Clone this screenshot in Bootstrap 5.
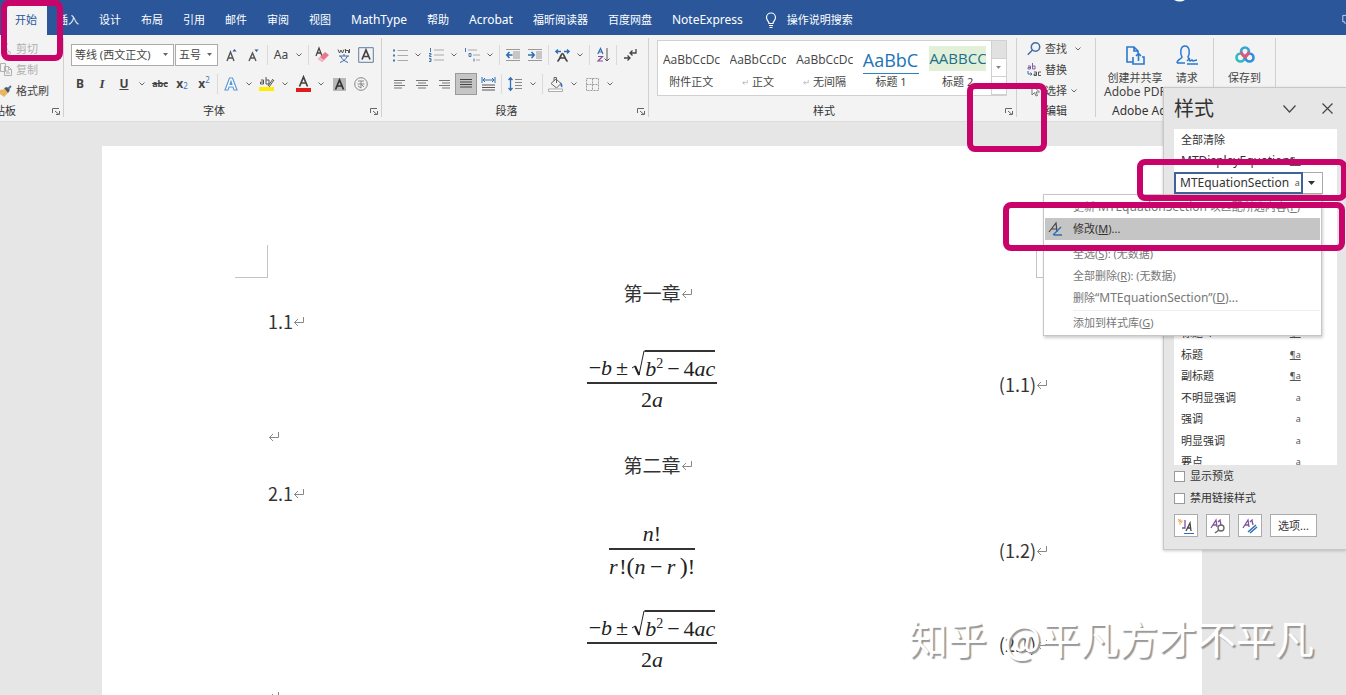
<!DOCTYPE html>
<html lang="zh-CN">
<head>
<meta charset="utf-8">
<meta name="viewport" content="width=device-width, initial-scale=1">
<title>文档 - Word</title>
<link href="https://cdn.jsdelivr.net/npm/bootstrap@5.3.0/dist/css/bootstrap.min.css" rel="stylesheet">
<style>
  :root { --blue:#2b579a; --ink:#444; --line:#d0d0d0; --pink:#c8046a; --desk:#e6e6e6; }
  body { font-family:"Noto Sans","Noto Sans CJK SC",sans-serif; font-size:11px; line-height:16px; color:var(--ink); background:var(--desk); height:100vh; overflow:hidden; }
  svg { display:block; flex:none; overflow:visible; }
  button { font:inherit; color:inherit; background:none; border:0; padding:0; }
  a { color:inherit; text-decoration:none; }
  .lt { font-size:12px; }

  /* tab strip */
  .tabs { background:var(--blue); color:#fff; height:35px; padding:5px 0 0 5px; overflow:hidden; flex:none; }
  .tabs a { padding:7px 10px; height:30px; white-space:nowrap; }
  .tabs a.active { background:#f3f3f3; color:var(--blue); }

  /* ribbon */
  .ribbon { background:#f3f3f3; padding:3px 0 4px; border-bottom:1px solid #dcdcdc; overflow:hidden; flex:none; }
  .group { flex:none; min-height:79px; border-right:1px solid var(--line); display:flex; flex-direction:column; }
  .g-clip { width:64px; } .g-font { width:318px; } .g-para { width:267px; } .g-style { width:368px; }
  .g-edit { width:79px; } .g-adobe { width:118px; } .g-save { width:62px; }
  .foot { margin-top:auto; height:12px; line-height:12px; display:flex; justify-content:center; align-items:center; color:#333; position:relative; white-space:nowrap; }
  .foot button { position:absolute; right:3px; top:3px; }
  .tools { height:22px; }
  .tb { width:22px; height:22px; display:flex; align-items:center; justify-content:center; flex:none; }
  .tb.on { background:#c5c5c5; border:1px solid #999; }
  .chev { width:14px; height:22px; display:flex; align-items:center; justify-content:center; flex:none; }
  .vr-s { width:5px; height:20px; display:flex; justify-content:center; }
  .vr-s::before { content:""; width:1px; background:#dadada; }
  .combo { height:22px; border:1px solid #ababab; border-radius:0; padding:0 12px 0 3px; font-size:11px; line-height:16px; color:#444; background:#fff url("data:image/svg+xml,%3Csvg xmlns='http://www.w3.org/2000/svg' width='6' height='4'%3E%3Cpath d='M0 0h5L2.500 3z' fill='%23666'/%3E%3C/svg%3E") no-repeat right 4px center; appearance:none; }
  .cmd { height:21px; display:flex; align-items:center; gap:4px; }
  .off { color:#b0b0b0; }

  .gallery { background:#fff; border:1px solid var(--line); height:56px; margin:2px 9px 0 8px; }
  .style-item { flex:1 1 0; min-width:0; padding:0 5px; display:flex; flex-direction:column; text-align:center; }
  .sample { height:28px; margin-top:5px; line-height:28px; font-size:12px; font-family:"Open Sans","Noto Sans",sans-serif; overflow:hidden; white-space:nowrap; text-align:left; color:#444; }
  .sample.h1s { font-size:18px; color:#1c73b5; border-bottom:1px solid #2b83c6; }
  .sample.h2s { font-size:15px; color:#1c6f8c; background:#e2efd9; height:25px; line-height:25px; margin-bottom:3px; }
  .scrolls { width:15px; flex:none; border-left:1px solid var(--line); }
  .scrolls button { flex:1; border-bottom:1px solid var(--line); display:flex; align-items:center; justify-content:center; }
  .scrolls button:first-child { background:#e1e1e1; }
  .big { display:flex; flex-direction:column; align-items:center; line-height:14px; white-space:nowrap; padding-top:7px; }

  /* document */
  .desk { padding:24px 144px 0 102px; flex:1 1 0; min-height:0; overflow:hidden; }
  .sheet { background:#fff; padding:99px 133px 0; height:100%; overflow:hidden; }
  .crop { width:33px; height:33px; border:solid #c4c4c4; border-width:0 1px 1px 0; }
  .crop.end { border-width:0 0 1px 1px; }
  .copy { padding:0 33px; font-family:"Noto Sans CJK SC",sans-serif; font-size:19px; color:#333; }
  .copy p { margin:0; height:29px; line-height:29px; }
  .num { font-size:18px; }
  .pm { display:inline-block; width:12px; height:10px; margin-right:-12px; vertical-align:2px; }
  .eq { display:grid; grid-template-columns:1fr auto 1fr; align-items:center; padding:16px 0 5px; }
  .eq.tight { padding:10px 0 14px; }
  .frac { font-family:"Liberation Serif",serif; font-size:22px; line-height:32px; color:#222; text-align:center; }
  .over { height:32px; border-bottom:2px solid #333; padding:0 2px; display:flex; justify-content:center; }
  .under { height:32px; }
  .frac sup { font-size:14px; line-height:0; top:-8px; }
  .root { border-top:2px solid #333; margin-top:-2px; height:28px; line-height:34px; }
  .mx { margin:0 4px; }

  /* styles pane */
  .pane { position:absolute; right:0; top:87px; width:183px; height:463px; background:var(--desk); border:1px solid #c8c8c8; border-right:0; box-shadow:0 1px 3px rgba(0,0,0,.2); padding:0 9px 0 10px; color:#333; }
  .pane h2 { font-size:20px; line-height:41px; margin:0; font-weight:400; flex:1; color:#333; }
  .slist { height:336px; overflow:hidden; background:#fff; }
  .slist ul { height:344px; display:grid; grid-auto-rows:1fr; margin:0; padding:0; list-style:none; }
  .slist li { padding:0 38px 0 7px; display:flex; justify-content:space-between; align-items:center; position:relative; }
  .slist small { font-size:9px; color:#555; }
  .slist li.sel { margin-right:16px; padding:0; border:1px solid #aaa; }
  .sel .nm { border:2px solid #3d6398; flex:1; padding:0 1px 0 4px; margin:-1px; display:flex; align-items:center; justify-content:space-between; height:22px; }
  .sel button { width:20px; display:flex; justify-content:center; }
  .pane label { display:flex; align-items:center; gap:5px; height:22px; }
  .pane input { appearance:none; width:11px; height:11px; margin:0; background:#fff; border:1px solid #999; }
  .pbtn { height:23px; width:24px; background:#fff; border:1px solid #ababab; display:flex; align-items:center; justify-content:center; }
  .pbtn.wide { width:47px; }

  /* context menu */
  .ctx { position:absolute; right:24px; top:194px; width:279px; background:#fff; border:1px solid #c6c6c6; box-shadow:1px 2px 3px rgba(0,0,0,.2); padding:1px; color:#777; white-space:nowrap; }
  .ctx button { display:block; text-align:left; width:100%; height:22px; line-height:22px; padding-left:28px; }
  .ctx .hot { display:flex; align-items:center; background:#c5c5c5; color:#333; padding-left:3px; gap:9px; }
  .ctx hr { margin:1px 0 1px 28px; border-color:#bbb; }

  /* highlight frames and signature drawn over the window */
  .frame { position:absolute; border:6px solid var(--pink); border-radius:8px; pointer-events:none; }
  .f1 { left:1px; top:0; width:62px; height:61px; }
  .f2 { right:299px; top:83px; width:80px; height:69px; }
  .f3 { right:-1px; top:159px; width:210px; height:42px; }
  .f4 { right:1px; top:202px; width:342px; height:49px; }
  .sign { position:absolute; right:32px; top:609px; font:400 39px/56px "Noto Sans CJK SC",sans-serif; color:#fff; text-shadow:2px 2px 1px #999; white-space:nowrap; }
</style>
</head>
<body class="position-relative d-flex flex-column">
<svg width="0" height="0" class="position-absolute" aria-hidden="true">
  <symbol id="cv" viewBox="0 0 6 4"><path d="M.5.5 3 3 5.500.5" fill="none" stroke="#666"/></symbol>
  <symbol id="dl" viewBox="0 0 8 7"><path d="M.5 5V.5H7M3 3l4 3.500M7.500 3v3.500H4" fill="none" stroke="#666"/></symbol>
  <symbol id="ret" viewBox="0 0 12 10"><path d="M10.500 0v5.500H1.500M5 2 1.500 5.500 5 9" fill="none" stroke="#888"/></symbol>
</svg>

<nav class="tabs d-flex">
  <a href="#" class="active">开始</a><a href="#">插入</a><a href="#">设计</a><a href="#">布局</a><a href="#">引用</a><a href="#">邮件</a><a href="#">审阅</a><a href="#">视图</a><a href="#" class="lt">MathType</a><a href="#">帮助</a><a href="#" class="lt">Acrobat</a><a href="#">福昕阅读器</a><a href="#">百度网盘</a><a href="#" class="lt">NoteExpress</a>
  <a href="#" class="d-flex align-items-center gap-2 pe-0"><svg width="16" height="16" viewBox="0 0 16 16" fill="none" stroke="#fff" stroke-width="1.200"><path d="M6 11.500C6 9 3.500 8.500 3.500 5.500a4.500 4.500 0 0 1 9 0c0 3-2.500 3.500-2.500 6zM6 13.500h4M6.500 15.500h3"/></svg>操作说明搜索</a>
  <svg class="ms-auto mt-2" width="5" height="14" viewBox="0 0 7 14" fill="none" stroke="#fff"><path d="M8 .5H2.500v9H5l1 3"/></svg>
</nav>
<svg class="position-absolute top-0" style="right:159px" width="14" height="2" viewBox="0 0 14 2"><path d="M1 0q6 3 11 0" fill="#fff"/></svg>

<div class="ribbon d-flex">
  <section class="group g-clip">
    <button class="cmd off"><svg width="12" height="12" viewBox="0 0 12 12" fill="none" stroke="#bbb"><path d="M3 0l6 9M8 0 3 8"/><circle cx="3" cy="10" r="1.500"/><circle cx="9" cy="10" r="1.500"/></svg>剪切</button>
    <button class="cmd off"><svg width="12" height="13" viewBox="0 0 12 13" fill="#f3f3f3" stroke="#b0b0b0"><path d="M.5.5h5v8h-5zM4.500 3.500h4l3 3v6h-7zM8.500 3.500v3h3M6 8h3M6 10h4"/></svg>复制</button>
    <button class="cmd"><svg width="12" height="12" viewBox="0 0 12 12"><path d="M0 5l5-1 3 4-4 4-4-3z" fill="#e8b565"/><path d="M4 3l3-1 3 3-2 3z" fill="#555"/><path d="M8 4l3-3" stroke="#4a77ab" stroke-width="2"/></svg>格式刷</button>
    <div class="foot justify-content-end" style="padding-right:47px">剪贴板<button aria-label="剪贴板设置"><svg width="8" height="7"><use href="#dl"/></svg></button></div>
  </section>

  <section class="group g-font">
    <div class="tools d-flex align-items-center" style="margin:6px 0 0 7px">
      <select class="combo" style="width:103px" aria-label="字体"><option>等线 (西文正文)</option></select>
      <select class="combo" style="width:43px;margin:0 3px 0 1px" aria-label="字号"><option>五号</option></select>
      <button class="tb"><svg width="12" height="14" viewBox="0 0 12 14"><path d="M1 13 4.500 4 8 13M2.500 10h4" fill="none" stroke="#555" stroke-width="1.400"/><path d="M6.500 3.500 8.500 1l2 2.500z" fill="#2b579a"/></svg></button>
      <button class="tb"><svg width="12" height="14" viewBox="0 0 12 14"><path d="M1 13 4.500 5 8 13M2.500 10h4" fill="none" stroke="#555" stroke-width="1.400"/><path d="M6.500 1.500h4l-2 2.500z" fill="#2b579a"/></svg></button>
      <i class="vr-s"></i>
      <button class="tb lt">Aa</button><button class="chev"><svg width="6" height="4"><use href="#cv"/></svg></button>
      <i class="vr-s"></i>
      <button class="tb"><svg width="14" height="16" viewBox="0 0 14 16"><path d="M1 9 4 1l3 8M2 6h4" fill="none" stroke="#444" stroke-width="1.300"/><path d="M3 12 10 5l4 3-7 7z" fill="#e8798c"/><path d="M3 12l4 3 2-2-4-3z" fill="#f4bcc4"/></svg></button>
      <button class="tb"><svg width="14" height="15" viewBox="0 0 14 15" fill="none" stroke="#555"><path d="M1 1.500 2.500 5 4 2l1.500 3L7 1.500M8.500 1v4M8.500 2.500h3V5M12.500 1v4"/><path d="M2 8h10M7 6v2M3.500 8c2 4 4 5 7.500 6.500M10.500 8c-2 4-4 5-7.500 6.500" stroke="#3c6aa9"/></svg></button>
      <button class="tb"><svg width="16" height="16" viewBox="0 0 16 16" fill="none"><path d="M.7.7h14.600v14.600H.7z" stroke="#5f7f9f"/><path d="M4 12.500 8 3l4 9.500M5.500 9.500h5" stroke="#444" stroke-width="1.700"/></svg></button>
    </div>
    <div class="tools d-flex align-items-center" style="margin:7px 0 0 5px">
      <button class="tb fw-bold lt">B</button><button class="tb fw-bold fst-italic" style="font-family:'Liberation Serif',serif;font-size:13px">I</button><button class="tb fw-bold text-decoration-underline lt">U</button><button class="chev"><svg width="6" height="4"><use href="#cv"/></svg></button>
      <button class="tb fw-bold text-decoration-line-through" style="font-size:9px">abc</button>
      <button class="tb lt"><b>x</b><sub style="font-size:8px;color:#3c78b5">2</sub></button><button class="tb lt"><b>x</b><sup style="font-size:8px;color:#3c78b5">2</sup></button>
      <i class="vr-s"></i>
      <button class="tb"><svg width="14" height="14" viewBox="0 0 14 14"><path d="M1 13 5.500 1h3L13 13h-3l-1-3H5l-1 3zM6 7.500h2L7 4.500z" fill="#fff" stroke="#5b9bd5" stroke-width="1.200"/></svg></button><button class="chev"><svg width="6" height="4"><use href="#cv"/></svg></button>
      <button class="tb"><svg width="16" height="16" viewBox="0 0 16 16"><path d="M0 11h15v4H0z" fill="#ffee00"/><path d="M2 4h2.500v4H1.500V6h3M7 1v7h3V4H7M14 3l-5 7M15 4l-5 7" fill="none" stroke="#555"/></svg></button><button class="chev"><svg width="6" height="4"><use href="#cv"/></svg></button>
      <button class="tb"><svg width="15" height="16" viewBox="0 0 15 16"><path d="M0 12h15v4H0z" fill="#e01b1b"/><path d="M3.500 10.500 7.500 1l4 9.500M5 7h5" fill="none" stroke="#444" stroke-width="1.700"/></svg></button><button class="chev"><svg width="6" height="4"><use href="#cv"/></svg></button>
      <button class="tb"><svg width="13" height="13" viewBox="0 0 13 13"><path d="M0 0h13v13H0z" fill="#b8b8b8"/><path d="M2.500 11.500 6.500 2l4 9.500M4 8h5" fill="none" stroke="#333" stroke-width="1.700"/></svg></button>
      <button class="tb"><svg width="14" height="14" viewBox="0 0 14 14" fill="none" stroke="#888"><circle cx="7" cy="7" r="6.300"/><path d="M4 4h6M7 4v7L4 9M3.500 7h7M7 7l3 3"/></svg></button>
    </div>
    <div class="foot" style="padding-right:17px">字体<button aria-label="字体设置"><svg width="8" height="7"><use href="#dl"/></svg></button></div>
  </section>

  <section class="group g-para">
    <div class="tools d-flex align-items-center" style="margin:6px 0 0 7px">
      <button class="tb"><svg width="15" height="13" viewBox="0 0 15 13"><path d="M4.500 1.500H15M4.500 6.500H15M4.500 11.500H15" stroke="#aaa"/><path d="M0 .5h2v2H0zM0 5.500h2v2H0zM0 10.500h2v2H0z" fill="#4a77ab"/></svg></button><button class="chev"><svg width="6" height="4"><use href="#cv"/></svg></button>
      <button class="tb"><svg width="15" height="14" viewBox="0 0 15 14" fill="none"><path d="M5 2H15M5 7H15M5 12H15" stroke="#aaa"/><path d="M1.500 0v4M0 5.500h2v1.500H.5v1.500H2.500M0 10.500h2v3H0M.5 12H2" stroke="#4a77ab"/></svg></button><button class="chev"><svg width="6" height="4"><use href="#cv"/></svg></button>
      <button class="tb"><svg width="15" height="14" viewBox="0 0 15 14" fill="none"><path d="M3 2H12M8 7H15M11 12H15" stroke="#aaa"/><path d="M.5 0v4M4 5.500h2v3H4zM9 10.500v3" stroke="#4a77ab"/></svg></button><button class="chev"><svg width="6" height="4"><use href="#cv"/></svg></button>
      <i class="vr-s"></i>
      <button class="tb"><svg width="14" height="12" viewBox="0 0 14 12"><path d="M0 .5h14M0 11.500h14M7 3h7M7 5h7M7 7h7M7 9h7" stroke="#999"/><path d="M6.500 6H1M3.500 3 .8 6l2.700 3" fill="none" stroke="#2f6eb5" stroke-width="1.600"/></svg></button>
      <button class="tb"><svg width="14" height="12" viewBox="0 0 14 12"><path d="M0 .5h14M0 11.500h14M8 3h6M8 5h6M8 7h6M8 9h6" stroke="#999"/><path d="M0 6h6M3.500 3l2.700 3-2.700 3" fill="none" stroke="#2f6eb5" stroke-width="1.600"/></svg></button>
      <i class="vr-s"></i>
      <button class="tb"><svg width="15" height="13" viewBox="0 0 15 13" fill="none"><path d="M2.500 12.500C5 11 6 4.500 7.500 4.500s2.500 6.500 5 8M5 9h5" stroke="#444" stroke-width="1.700"/><path d="M6 2.500H1M3 .5.8 2.500 3 4.500M9 2.500h5M12 .5l2.200 2L12 4.500" stroke="#2f6eb5" stroke-width="1.300"/></svg></button><button class="chev"><svg width="6" height="4"><use href="#cv"/></svg></button>
      <i class="vr-s"></i>
      <button class="tb"><svg width="13" height="14" viewBox="0 0 13 14" fill="none"><path d="M.8 6 3.500.5 6 6M2 4h3" stroke="#2f6eb5" stroke-width="1.200"/><path d="M1 8.500h4.500L1 13h5" stroke="#8250a0" stroke-width="1.200"/><path d="M10 0v13M7.500 10.500 10 13l2.500-2.500" stroke="#555"/></svg></button>
      <i class="vr-s"></i>
      <button class="tb"><svg width="13" height="12" viewBox="0 0 13 12" fill="none" stroke="#444" stroke-width="1.300"><path d="M12 0v4H6M8.500 1.500 6 4l2.500 2.500M0 9h6M3.500 6.500 6 9l-2.500 2.500"/></svg></button>
    </div>
    <div class="tools d-flex align-items-center" style="margin:7px 0 0 7px">
      <button class="tb"><svg width="12" height="9" viewBox="0 0 12 9" stroke="#777"><path d="M0 .5h11M0 3h8M0 5.500h11M0 8h8"/></svg></button>
      <button class="tb"><svg width="12" height="9" viewBox="0 0 12 9" stroke="#777"><path d="M0 .5h12M2 3h8M0 5.500h12M2 8h8"/></svg></button>
      <button class="tb"><svg width="12" height="9" viewBox="0 0 12 9" stroke="#777"><path d="M1 .5h11M4 3h8M1 5.500h11M4 8h8"/></svg></button>
      <button class="tb on"><svg width="12" height="10" viewBox="0 0 12 10" stroke="#444"><path d="M0 .5h12M0 3h12M0 5.500h12M0 8h12"/></svg></button>
      <button class="tb"><svg width="15" height="15" viewBox="0 0 15 15" fill="none"><path d="M1 0v6M14 0v6M2 3h11M4 1 2 3l2 2M11 1l2 2-2 2" stroke="#2f6eb5"/><path d="M1 8h13M1 10.500h13M1 13h13" stroke="#555"/></svg></button>
      <i class="vr-s"></i>
      <button class="tb"><svg width="14" height="14" viewBox="0 0 14 14" fill="none"><path d="M2.500 1v12M.5 3l2-2.200 2 2.200M.5 11l2 2.200 2-2.200" stroke="#2f6eb5" stroke-width="1.300"/><path d="M7 2.500h7M7 5.500h7M7 8.500h7M7 11.500h7" stroke="#888"/></svg></button><button class="chev"><svg width="6" height="4"><use href="#cv"/></svg></button>
      <i class="vr-s"></i>
      <button class="tb"><svg width="16" height="15" viewBox="0 0 16 15" fill="none"><path d="M3 6.500 8 2l5 4.500-4.500 4.500zM6 4V.5h2.500V6" stroke="#666"/><path d="M12.500 5q3 3 1.500 5.500-2-1-1.500-5.500" fill="#2f6eb5"/><path d="M.5 12h14v2.500H.5z" stroke="#aaa" fill="#fff"/></svg></button><button class="chev"><svg width="6" height="4"><use href="#cv"/></svg></button>
      <button class="tb"><svg width="13" height="13" viewBox="0 0 13 13" fill="none" stroke="#999" stroke-dasharray="2 1"><path d="M.5.5h12v12H.5zM6.500.5v12M.5 6.500h12"/></svg></button><button class="chev"><svg width="6" height="4"><use href="#cv"/></svg></button>
    </div>
    <div class="foot" style="padding-right:17px">段落<button aria-label="段落设置"><svg width="8" height="7"><use href="#dl"/></svg></button></div>
  </section>

  <section class="group g-style">
    <div class="gallery d-flex">
      <button class="style-item"><span class="sample">AaBbCcDc</span><span>附件正文</span></button>
      <button class="style-item"><span class="sample">AaBbCcDc</span><span class="d-flex align-items-center justify-content-center gap-1"><svg width="6" height="5"><use href="#ret"/></svg>正文</span></button>
      <button class="style-item"><span class="sample">AaBbCcDc</span><span class="d-flex align-items-center justify-content-center gap-1"><svg width="6" height="5"><use href="#ret"/></svg>无间隔</span></button>
      <button class="style-item"><span class="sample h1s">AaBbC</span><span>标题 1</span></button>
      <button class="style-item"><span class="sample h2s">AABBCC</span><span>标题 2</span></button>
      <div class="scrolls d-flex flex-column"><button aria-label="上"></button><button aria-label="下"><svg width="5" height="3" viewBox="0 0 5 3"><path d="M0 0h5L2.500 3z" fill="#888"/></svg></button><button aria-label="更多"></button></div>
    </div>
    <div class="foot" style="padding-right:17px">样式<button aria-label="样式设置"><svg width="8" height="7"><use href="#dl"/></svg></button></div>
  </section>

  <section class="group g-edit">
    <button class="cmd" style="padding-left:10px"><svg width="14" height="14" viewBox="0 0 14 14" fill="none" stroke="#3f6ea5" stroke-width="1.500"><circle cx="8.500" cy="5" r="4.200"/><path d="M5.500 8 .8 12.800"/></svg>查找<svg class="ms-1" width="6" height="4"><use href="#cv"/></svg></button>
    <button class="cmd" style="padding-left:10px"><svg width="14" height="14" viewBox="0 0 14 14" fill="none" stroke="#8060a0"><path d="M1 3h2.500v3H1V4.500h2.500M5.500 0v6H8V3H5.500"/><path d="M7 9h2.500v3.500H7V11h2.500M14 9h-2.500v3.500H14" stroke="#555"/><path d="M1 8v3h4M3.500 9.500 5 11l-1.500 1.500" stroke="#3f6ea5"/></svg>替换</button>
    <button class="cmd" style="padding-left:10px"><svg width="14" height="14" viewBox="0 0 14 14" fill="#fff" stroke="#777"><path d="M5 1v10l2.500-2.500L9 12l1.500-.5L9 8h3.500z"/></svg>选择<svg width="6" height="4"><use href="#cv"/></svg></button>
    <div class="foot">编辑</div>
  </section>

  <section class="group g-adobe">
    <div class="d-flex">
      <button class="big" style="margin-left:8px"><svg style="margin-bottom:6px" width="20" height="20" viewBox="0 0 20 20" fill="none" stroke="#2b78d0" stroke-width="1.600"><path d="M8 17H2V2h7l4 4v2M9 2v4h4M8 12v7h11v-7h-2M13.500 16V9M11 11l2.500-2.500L16 11"/></svg><span>创建并共享</span><span class="lt">Adobe PDF</span></button>
      <button class="big" style="margin-left:10px"><svg style="margin-bottom:6px" width="22" height="20" viewBox="0 0 22 20" fill="none" stroke="#2b78d0" stroke-width="1.500"><path d="M1 18h8M1 18c0-4 5-4 5-6C4 9 4 1 9 1s5 8 3 11q0 1 2 2M11 19h11M11 16l2-2 1 2 2-1 1 1 4-1"/></svg>请求</button>
    </div>
    <div class="foot justify-content-start ps-3 lt">Adobe Acrobat</div>
  </section>

  <section class="group g-save">
    <button class="big"><svg style="margin-bottom:6px" width="20" height="20" viewBox="0 0 20 20" fill="none" stroke-width="2.600"><circle cx="5.500" cy="12.500" r="4" stroke="#31b9c3"/><circle cx="14.500" cy="12.500" r="4" stroke="#2f8ee0"/><path d="M6.500 8.500a4 4 0 1 1 7 0" stroke="#2fa8d8"/><path d="M6.500 6.500q0 4 3.500 5.500 3.500-1.500 3.500-5.500" stroke="#ea5573"/></svg>保存到</button>
  </section>
</div>

<main class="desk">
  <article class="sheet">
    <div class="d-flex justify-content-between"><i class="crop"></i><i class="crop end"></i></div>
    <div class="copy">
      <p class="text-center">第一章<svg class="pm"><use href="#ret"/></svg></p>
      <p class="num">1.1<svg class="pm"><use href="#ret"/></svg></p>
      <div class="eq">
        <span></span>
        <div class="frac"><div class="over"><span>−<i>b</i></span><span class="mx">±</span><svg width="13" height="28" viewBox="0 0 13 28" style="margin-top:-2px" fill="none" stroke="#222"><path d="M0 18l3-2 4 9 5-24h1"/><path d="M3 16l4 9" stroke-width="2"/></svg><span class="root"><i>b</i><sup>2</sup><span class="mx">−</span>4<i>ac</i></span></div><div class="under">2<i>a</i></div></div>
        <span class="num text-end">(1.1)<svg class="pm"><use href="#ret"/></svg></span>
      </div>
      <p><svg class="pm"><use href="#ret"/></svg></p>
      <p class="text-center">第二章<svg class="pm"><use href="#ret"/></svg></p>
      <p class="num">2.1<svg class="pm"><use href="#ret"/></svg></p>
      <div class="eq tight">
        <span></span>
        <div class="frac"><div class="over"><i>n</i>!</div><div class="under"><i>r</i>&hairsp;!<span class="fs-4">(</span><i>n</i>&thinsp;−&thinsp;<i>r</i>&thinsp;<span class="fs-4">)</span>!</div></div>
        <span class="num text-end">(1.2)<svg class="pm"><use href="#ret"/></svg></span>
      </div>
      <div class="eq">
        <span></span>
        <div class="frac"><div class="over"><span>−<i>b</i></span><span class="mx">±</span><svg width="13" height="28" viewBox="0 0 13 28" style="margin-top:-2px" fill="none" stroke="#222"><path d="M0 18l3-2 4 9 5-24h1"/><path d="M3 16l4 9" stroke-width="2"/></svg><span class="root"><i>b</i><sup>2</sup><span class="mx">−</span>4<i>ac</i></span></div><div class="under">2<i>a</i></div></div>
        <span class="num text-end">(2.1)<svg class="pm"><use href="#ret"/></svg></span>
      </div>
      <p><svg class="pm"><use href="#ret"/></svg></p>
    </div>
  </article>
</main>

<aside class="pane">
  <div class="d-flex align-items-center">
    <h2>样式</h2>
    <button aria-label="选项" style="margin-right:26px"><svg width="13" height="8" viewBox="0 0 13 8" fill="none" stroke="#444" stroke-width="1.200"><path d="M.5.5l6 6.500 6-6.500"/></svg></button>
    <button aria-label="关闭" class="me-1"><svg width="11" height="11" viewBox="0 0 11 11" stroke="#444" stroke-width="1.200"><path d="M.5.5l10 10M10.500.5l-10 10"/></svg></button>
  </div>
  <div class="slist">
    <ul>
      <li>全部清除</li>
      <li><span class="lt">MTDisplayEquation</span><small><u>¶a</u></small></li>
      <li class="sel"><span class="nm"><span class="lt">MTEquationSection</span><small>a</small></span><button aria-label="展开"><svg width="7" height="4" viewBox="0 0 7 4"><path d="M0 0h7L3.500 4z" fill="#333"/></svg></button></li>
      <li></li><li></li><li></li><li></li><li></li><li></li>
      <li>标题 4<small><u>¶a</u></small></li>
      <li>标题<small><u>¶a</u></small></li>
      <li>副标题<small><u>¶a</u></small></li>
      <li>不明显强调<small>a</small></li>
      <li>强调<small>a</small></li>
      <li>明显强调<small>a</small></li>
      <li>要点<small>a</small></li>
    </ul>
  </div>
  <label><input type="checkbox">显示预览</label>
  <label><input type="checkbox">禁用链接样式</label>
  <div class="d-flex gap-2" style="margin-top:5px">
    <button class="pbtn" aria-label="新建样式"><svg width="16" height="16" viewBox="0 0 16 16" fill="none"><path d="M2 1v6M0 3h5M0 1l4 4" stroke="#f0a860"/><path d="M7 2v8H4" stroke="#8050a0" stroke-width="1.300"/><path d="M8 13l4-8 1 8M9 10h4" stroke="#444" stroke-width="1.300"/><path d="M6 15.500h10" stroke="#2f6eb5"/></svg></button>
    <button class="pbtn" aria-label="样式检查器"><svg width="16" height="16" viewBox="0 0 16 16" fill="none"><path d="M1 10 6 2l1 7M3 7h4M8 4l2-2 1 5" stroke="#8050a0" stroke-width="1.300"/><circle cx="11" cy="10" r="3" stroke="#666" stroke-width="1.300"/><path d="M9 12l-4 3" stroke="#666" stroke-width="1.500"/></svg></button>
    <button class="pbtn" aria-label="管理样式"><svg width="16" height="16" viewBox="0 0 16 16" fill="none"><path d="M1 10 6 2l1 7M3 7h4M8 4l2-2 1 5" stroke="#8050a0" stroke-width="1.300"/><path d="M6 14l8-7M8 15l7-6" stroke="#2f6eb5" stroke-width="1.500"/></svg></button>
    <button class="pbtn wide">选项...</button>
  </div>
</aside>

<div class="ctx" role="menu">
  <button>更新 <span class="lt">MTEquationSection</span> 以匹配所选内容(<u>P</u>)</button>
  <button class="hot"><svg width="16" height="16" viewBox="0 0 16 16" fill="none"><path d="M1 11 8 2l1 9M3 8h6" stroke="#444" stroke-width="1.200"/><path d="M5 14 13 6M6 14h8" stroke="#2f6eb5" stroke-width="1.300"/></svg><span>修改(<u>M</u>)...</span></button>
  <hr class="invisible">
  <button>全选(<u>S</u>): (无数据)</button>
  <button>全部删除(<u>R</u>): (无数据)</button>
  <button>删除<span class="lt">“MTEquationSection”(<u>D</u>)...</span></button>
  <hr>
  <button>添加到样式库(<u>G</u>)</button>
</div>

<div class="sign">知乎&nbsp; @平凡方才不平凡</div>
<div class="frame f1"></div>
<div class="frame f2"></div>
<div class="frame f3"></div>
<div class="frame f4"></div>
</body>
</html>
